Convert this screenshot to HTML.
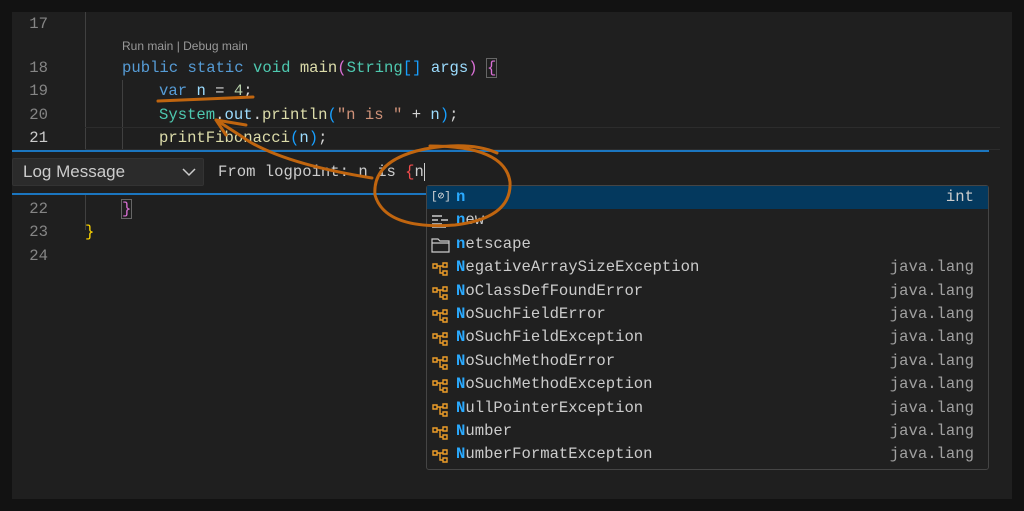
<!DOCTYPE html>
<html><head><meta charset="utf-8"><style>
body{margin:0;width:1024px;height:511px;background:#121212;position:relative;overflow:hidden;font-family:"Liberation Mono",monospace;}
.ed{position:absolute;left:12px;top:12px;width:1000px;height:487px;background:#1f1f1f;}
.a{position:absolute;white-space:pre;font-size:15.6px;line-height:20px;}
.ln{color:#858585;width:38px;text-align:right;left:10px;}
.k{color:#569cd6}.t{color:#4ec9b0}.f{color:#dcdcaa}.v{color:#9cdcfe}.s{color:#ce9178}.n{color:#b5cea8}.p{color:#da70d6}.y{color:#ffd700}.w{color:#d4d4d4}.b{color:#179fff}
.sg{position:absolute;left:426px;top:185px;width:561px;height:283px;background:#202020;border:1px solid #454545;border-radius:3px;}
.row{position:absolute;left:0;width:561px;height:23.4px;font-size:15.6px;line-height:23.4px;color:#ccc;}
.row .l{position:absolute;left:29px;}
.row .r{position:absolute;right:14px;color:#a0a0a0;}
.row .ic{position:absolute;left:4px;top:5px;}
.m{color:#2aaaff;font-weight:bold}
</style></head><body>
<div class="ed">
<div style="position:absolute;left:73px;top:0;width:1px;height:140px;background:#404040"></div>
<div style="position:absolute;left:73px;top:182px;width:1px;height:36px;background:#404040"></div>
<div style="position:absolute;left:110px;top:68px;width:1px;height:70px;background:#404040"></div>
<div style="position:absolute;left:73px;top:115px;width:915px;height:21px;border-top:1px solid #2c2c2c;border-bottom:1px solid #2c2c2c"></div>
<div style="position:absolute;left:0;top:138px;width:977px;height:2px;background:#1b76c0"></div>
<div style="position:absolute;left:0;top:181px;width:977px;height:2px;background:#1b76c0"></div>
<div style="position:absolute;left:0;top:146px;width:192px;height:28px;background:#2b2b2b;border:1px solid #333;border-radius:2px;box-sizing:border-box"></div>
<div style="position:absolute;left:11px;top:149px;font:17px/22px 'Liberation Sans',sans-serif;color:#ccc">Log Message</div>
<svg style="position:absolute;left:170px;top:155px" width="14" height="10"><path d="M1 2 L7 8 L13 2" stroke="#ccc" stroke-width="1.5" fill="none"/></svg>
</div>
<div class="a ln" style="top:14px">17</div>
<div class="a" style="left:122px;top:37px;font:12px/18px 'Liberation Sans',sans-serif;color:#999">Run main | Debug main</div>
<div class="a ln" style="top:58px">18</div>
<div class="a" style="left:122px;top:58px"><span class="k">public static</span> <span class="t">void</span> <span class="f">main</span><span class="p">(</span><span class="t">String</span><span class="b">[]</span> <span class="v">args</span><span class="p">)</span> <span class="p" style="outline:1px solid #666">{</span></div>
<div class="a ln" style="top:81px">19</div>
<div class="a" style="left:159px;top:81px"><span class="k">var</span> <span class="v">n</span> <span class="w">=</span> <span class="n">4</span><span class="w">;</span></div>
<div class="a ln" style="top:105px">20</div>
<div class="a" style="left:159px;top:105px"><span class="t">System</span><span class="w">.</span><span class="v">out</span><span class="w">.</span><span class="f">println</span><span class="b">(</span><span class="s">"n is "</span> <span class="w">+</span> <span class="v">n</span><span class="b">)</span><span class="w">;</span></div>
<div class="a ln" style="top:128px;color:#ccc">21</div>
<div class="a" style="left:159px;top:128px"><span class="f">printFibonacci</span><span class="b">(</span><span class="v">n</span><span class="b">)</span><span class="w">;</span></div>
<div class="a" style="left:218px;top:162px;color:#ccc">From logpoint: n is <span style="color:#f14c4c">{</span>n<span style="border-left:1.5px solid #ccc"></span></div>
<div class="a ln" style="top:199px">22</div>
<div class="a" style="left:122px;top:199px"><span class="p" style="outline:1px solid #666">}</span></div>
<div class="a ln" style="top:222px">23</div>
<div class="a" style="left:85px;top:222px"><span class="y">}</span></div>
<div class="a ln" style="top:246px">24</div>
<div class="sg">
<div class="row" style="top:0;background:#04395e;color:#fff"><span class="ic" style="font-size:11px;line-height:12px;color:#ddd">[⊘]</span><span class="l m">n</span><span class="r" style="color:#ccc">int</span></div>
<div class="row" style="top:23.4px"><svg class="ic" width="20" height="14"><path d="M1 2h10M1 6h6M10 6h7M1 10h10M1 13h14" stroke="#ccc" stroke-width="1.5"/></svg><span class="l"><span class="m">n</span>ew</span></div>
<div class="row" style="top:46.8px"><svg class="ic" width="20" height="15"><path d="M1 1h6l2 2h9v11H1z M1 5h17" stroke="#ccc" stroke-width="1.2" fill="none"/></svg><span class="l"><span class="m">n</span>etscape</span></div>
<div class="row" style="top:70.2px"><svg class="ic" width="20" height="15"><path d="M2 3h4v4H2zM12 2h4v4h-4zM12 10h4v4h-4zM6 5h6M9 5v7h3" stroke="#ee9d28" stroke-width="1.4" fill="none"/></svg><span class="l"><span class="m">N</span>egativeArraySizeException</span><span class="r">java.lang</span></div>
<div class="row" style="top:93.6px"><svg class="ic" width="20" height="15"><path d="M2 3h4v4H2zM12 2h4v4h-4zM12 10h4v4h-4zM6 5h6M9 5v7h3" stroke="#ee9d28" stroke-width="1.4" fill="none"/></svg><span class="l"><span class="m">N</span>oClassDefFoundError</span><span class="r">java.lang</span></div>
<div class="row" style="top:117px"><svg class="ic" width="20" height="15"><path d="M2 3h4v4H2zM12 2h4v4h-4zM12 10h4v4h-4zM6 5h6M9 5v7h3" stroke="#ee9d28" stroke-width="1.4" fill="none"/></svg><span class="l"><span class="m">N</span>oSuchFieldError</span><span class="r">java.lang</span></div>
<div class="row" style="top:140.4px"><svg class="ic" width="20" height="15"><path d="M2 3h4v4H2zM12 2h4v4h-4zM12 10h4v4h-4zM6 5h6M9 5v7h3" stroke="#ee9d28" stroke-width="1.4" fill="none"/></svg><span class="l"><span class="m">N</span>oSuchFieldException</span><span class="r">java.lang</span></div>
<div class="row" style="top:163.8px"><svg class="ic" width="20" height="15"><path d="M2 3h4v4H2zM12 2h4v4h-4zM12 10h4v4h-4zM6 5h6M9 5v7h3" stroke="#ee9d28" stroke-width="1.4" fill="none"/></svg><span class="l"><span class="m">N</span>oSuchMethodError</span><span class="r">java.lang</span></div>
<div class="row" style="top:187.2px"><svg class="ic" width="20" height="15"><path d="M2 3h4v4H2zM12 2h4v4h-4zM12 10h4v4h-4zM6 5h6M9 5v7h3" stroke="#ee9d28" stroke-width="1.4" fill="none"/></svg><span class="l"><span class="m">N</span>oSuchMethodException</span><span class="r">java.lang</span></div>
<div class="row" style="top:210.6px"><svg class="ic" width="20" height="15"><path d="M2 3h4v4H2zM12 2h4v4h-4zM12 10h4v4h-4zM6 5h6M9 5v7h3" stroke="#ee9d28" stroke-width="1.4" fill="none"/></svg><span class="l"><span class="m">N</span>ullPointerException</span><span class="r">java.lang</span></div>
<div class="row" style="top:234px"><svg class="ic" width="20" height="15"><path d="M2 3h4v4H2zM12 2h4v4h-4zM12 10h4v4h-4zM6 5h6M9 5v7h3" stroke="#ee9d28" stroke-width="1.4" fill="none"/></svg><span class="l"><span class="m">N</span>umber</span><span class="r">java.lang</span></div>
<div class="row" style="top:257.4px"><svg class="ic" width="20" height="15"><path d="M2 3h4v4H2zM12 2h4v4h-4zM12 10h4v4h-4zM6 5h6M9 5v7h3" stroke="#ee9d28" stroke-width="1.4" fill="none"/></svg><span class="l"><span class="m">N</span>umberFormatException</span><span class="r">java.lang</span></div>
</div>
<svg style="position:absolute;left:0;top:0" width="1024" height="511">
<g stroke="#c0650f" stroke-width="3" fill="none" stroke-linecap="round">
<path d="M158 101 Q205 99 253 97"/>
<path d="M372 178 Q290 165 250 142 Q232 130 216 120"/>
<path d="M216 120 L246 125 M216 120 L226 135"/>
<path d="M430 146 Q505 146 510 182 Q512 218 455 225 Q385 230 375 195 Q372 160 425 149 Q470 141 497 153"/>
</g></svg>
</body></html>
